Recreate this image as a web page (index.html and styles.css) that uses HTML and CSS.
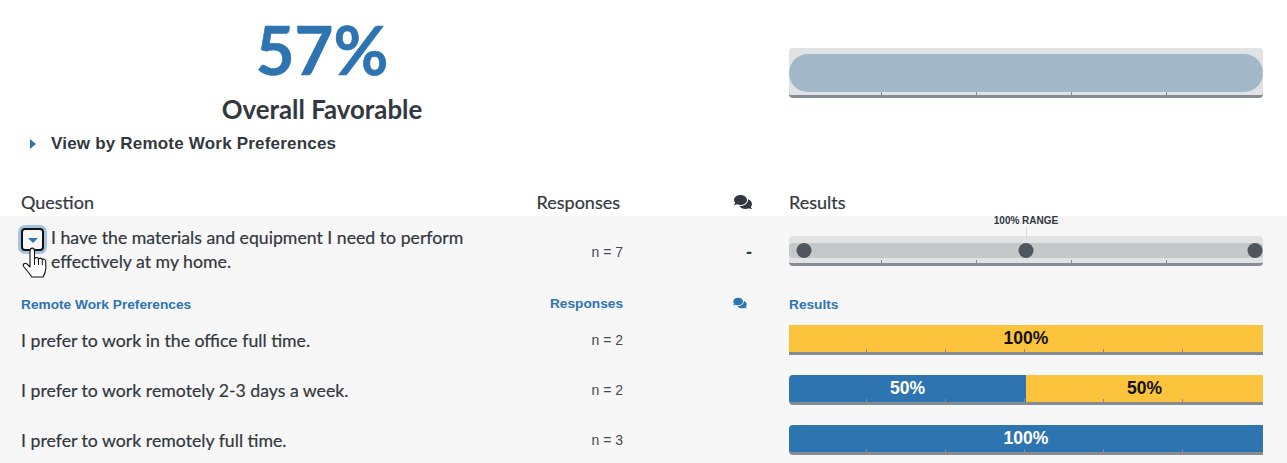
FILE: index.html
```html
<!DOCTYPE html>
<html lang="en">
<head>
    <meta charset="UTF-8">
    <meta name="viewport" content="width=device-width, initial-scale=1.0">
    <title>Overall Favorable</title>
    <link rel="stylesheet" href="styles.css">
</head>
<body>
    <svg class="icon-defs" width="0" height="0" aria-hidden="true">
        <symbol id="comments" viewBox="0 0 576 512">
            <path d="M416 192c0-88.4-93.1-160-208-160S0 103.6 0 192c0 34.3 14.1 65.9 38 92-13.4 30.2-35.5 54.2-35.8 54.5-2.2 2.3-2.8 5.7-1.5 8.7S4.8 352 8 352c36.6 0 66.9-12.3 88.7-25 32.2 15.7 70.3 25 111.3 25 114.9 0 208-71.6 208-160zm122 220c23.9-26 38-57.7 38-92 0-66.9-53.5-124.2-129.3-148.1.9 6.6 1.3 13.3 1.3 20.1 0 105.9-107.7 192-240 192-10.8 0-21.3-.8-31.7-1.9C207.8 439.6 281.8 480 368 480c41 0 79.1-9.2 111.3-25 21.8 12.7 52.1 25 88.7 25 3.2 0 6.1-1.9 7.3-4.8 1.3-2.9.7-6.3-1.5-8.7-.3-.3-22.4-24.2-35.8-54.5z"/>
        </symbol>
    </svg>

    <section class="summary">
        <div class="summary-left">
            <div class="score">57%</div>
            <div class="score-label">Overall Favorable</div>
            <div class="view-by"><span class="arrow-right"></span>View by Remote Work Preferences</div>
        </div>
        <div class="bar bar-overall">
            <div class="overall-fill"></div>
            <div class="ticks ticks-4"><i></i><i></i><i></i><i></i></div>
        </div>
    </section>

    <div class="row head-row">
        <div>Question</div>
        <div class="head-resp">Responses</div>
        <div class="col-icon"><svg class="icon-comments"><use href="#comments"/></svg></div>
        <div>Results</div>
    </div>

    <section class="details">
        <div class="row main-row">
            <div class="main-question">
                <button type="button" class="toggle"><span class="arrow-down"></span></button>
                <svg class="hand" width="26" height="31" viewBox="0 0 26 31">
                    <path d="M8 3.5c0-3.200 4.500-3.200 4.500 0v9c0-2.600 4-2.600 4 .2 0-2.200 3.800-2.200 3.800.6 0-1.800 3.500-1.600 3.500 1.200v7c0 3.500-1.300 6-2.800 8.500H10c-1.800-2.500-4.500-6-8-10-2.200-2.700 1-5 3.200-2.800l2.800 2.800z" fill="#fff" stroke="#111" stroke-width="1.100" stroke-linejoin="round"/>
                    <path d="M12.500 12.500v5.500M16.500 12.700v5.300M20.300 13.800v4.200" fill="none" stroke="#111" stroke-width="1"/>
                </svg>
                <span>I have the materials and equipment I need to perform effectively at my home.</span>
            </div>
            <div class="count">n = 7</div>
            <div class="col-icon dash">-</div>
            <div class="bar bar-range">
                <div class="range-label">100% RANGE</div>
                <div class="range-line"></div>
                <div class="range-band"></div>
                <span class="dot" style="left:3.2%"></span>
                <span class="dot" style="left:50.1%"></span>
                <span class="dot" style="left:98.3%"></span>
                <div class="ticks ticks-4"><i></i><i></i><i></i><i></i></div>
            </div>
        </div>

        <div class="row sub-head">
            <div>Remote Work Preferences</div>
            <div class="count sub-resp">Responses</div>
            <div class="col-icon sub-resp"><svg class="icon-comments-small"><use href="#comments"/></svg></div>
            <div>Results</div>
        </div>

        <div class="row pref-row">
            <div>I prefer to work in the office full time.</div>
            <div class="count">n = 2</div>
            <div></div>
            <div class="bar bar-stack bar-square">
                <div class="seg seg-yellow" style="width:100%">100%</div>
                <div class="ticks ticks-6"><i></i><i></i><i></i><i></i><i></i></div>
            </div>
        </div>
        <div class="row pref-row">
            <div>I prefer to work remotely 2-3 days a week.</div>
            <div class="count">n = 2</div>
            <div></div>
            <div class="bar bar-stack">
                <div class="seg seg-blue" style="width:50%">50%</div>
                <div class="seg seg-yellow" style="width:50%">50%</div>
                <div class="ticks ticks-6"><i></i><i></i><i></i><i></i><i></i></div>
            </div>
        </div>
        <div class="row pref-row">
            <div>I prefer to work remotely full time.</div>
            <div class="count">n = 3</div>
            <div></div>
            <div class="bar bar-stack">
                <div class="seg seg-blue" style="width:100%">100%</div>
                <div class="ticks ticks-6"><i></i><i></i><i></i><i></i><i></i></div>
            </div>
        </div>
    </section>
</body>
</html>
```

FILE: styles.css
```css
*{margin:0;padding:0;box-sizing:border-box;}
html,body{height:100%;overflow:hidden;}
body{background:#fff;color:#32383e;font-family:"Lato",Arial,sans-serif;font-size:18px;}
.icon-defs{position:absolute;}

.summary{height:190px;display:flex;padding:0 24px 0 21px;}
.summary-left{width:602px;margin-right:166px;}
.score{color:#2e74b0;font-size:67px;font-weight:700;line-height:72px;text-align:center;margin-top:13px;-webkit-text-stroke:.6px #2e74b0;}
.score-label{font-size:25.800px;font-weight:700;line-height:30px;text-align:center;margin-top:9px;}
.view-by{font-family:"Liberation Sans",Arial,sans-serif;font-size:17px;letter-spacing:.2px;font-weight:700;line-height:20px;margin-top:10px;display:flex;align-items:center;padding-left:9px;}
.arrow-right{width:0;height:0;border-left:6px solid #2e74b0;border-top:5.500px solid transparent;border-bottom:5.500px solid transparent;margin-right:15px;}

.row{display:grid;grid-template-columns:505px 97px 166px 474px;padding:0 24px 0 21px;align-items:center;}
.head-row{height:26px;line-height:24px;padding-bottom:2px;-webkit-text-stroke:.2px #32383e;}
.head-resp{text-align:right;margin-right:3px;white-space:nowrap;justify-self:end;}
.col-icon{text-align:right;padding-right:37px;}
.icon-comments{width:18px;height:16px;fill:#32383e;display:block;margin-left:auto;}
.icon-comments-small{width:14px;height:12px;fill:#2e74b0;display:block;margin-left:auto;margin-right:5px;}

.details{background:#f7f7f7;height:247px;}
.main-row{height:75px;}
.main-row .count,.main-row .dash{margin-top:-3px;}
.main-question{position:relative;display:flex;align-items:flex-start;font-size:17.700px;line-height:24px;align-self:start;padding-top:10px;width:460px;-webkit-text-stroke:.2px #32383e;}
.toggle{flex:none;width:23px;height:23px;margin:2px 7px 0 0;background:#f7f7f7;border:2px solid #111;border-radius:4px;box-shadow:0 0 0 3px #a6c2e2;display:flex;align-items:center;justify-content:center;}
.arrow-down{width:0;height:0;border-top:5px solid #2e74b0;border-left:5px solid transparent;border-right:5px solid transparent;margin-top:2px;}
.hand{position:absolute;left:1px;top:31px;}
.count{font-family:"Liberation Sans",Arial,sans-serif;font-size:14px;text-align:right;color:#444a50;}
.dash{font-family:"Liberation Sans",Arial,sans-serif;font-weight:700;font-size:18px;}

.bar{position:relative;width:474px;display:flex;border-bottom:3px solid #858c96;border-radius:4px;}
.bar-overall{height:50px;margin-top:48px;background:#e1e2e4;padding-top:6px;}
.overall-fill{width:100%;height:38px;background:#a2b8c9;border-radius:19px;}

.bar-range{height:30px;background:#e1e2e4;margin-top:-5px;}
.range-label{position:absolute;left:0;right:0;top:-20px;text-align:center;font-family:"Liberation Sans",Arial,sans-serif;font-size:10px;font-weight:700;line-height:10px;}
.range-line{position:absolute;left:50.100%;top:-10px;height:17px;border-left:1px solid #dcdcdc;}
.range-band{width:100%;height:15px;margin-top:7px;background:#c6c7c9;border-radius:4px;}
.dot{position:absolute;top:7px;width:15px;height:15px;border-radius:50%;background:#50565f;transform:translateX(-50%);}

.ticks{position:absolute;left:0;right:0;bottom:0;display:flex;}
.ticks i{display:block;height:3px;border-right:1px solid #858c96;}
.ticks-4 i{width:95px;}
.ticks-4 i:first-child{width:93px;}
.ticks-6 i{width:79px;}
.ticks-6 i:first-child{width:78px;}

.sub-head{height:24px;padding-top:3px;font-family:"Liberation Sans",Arial,sans-serif;font-size:13.700px;font-weight:700;color:#2e74b0;}
.sub-head .count{color:#2e74b0;font-size:13.700px;}
.sub-resp{margin-top:-3px;}

.pref-row{height:50px;font-size:17.700px;-webkit-text-stroke:.2px #32383e;}
.pref-row .count,.pref-row .bar{-webkit-text-stroke:0;}
.bar-stack{height:30px;margin-top:-1px;font-family:"Liberation Sans",Arial,sans-serif;font-size:17.500px;font-weight:700;overflow:hidden;border-radius:4px 0 0 4px;}
.bar-square{border-radius:0;}
.seg{height:27px;line-height:27px;text-align:center;}
.seg-blue{background:#2e74b0;color:#fff;}
.seg-yellow{background:#fcc43d;color:#111;}
```
